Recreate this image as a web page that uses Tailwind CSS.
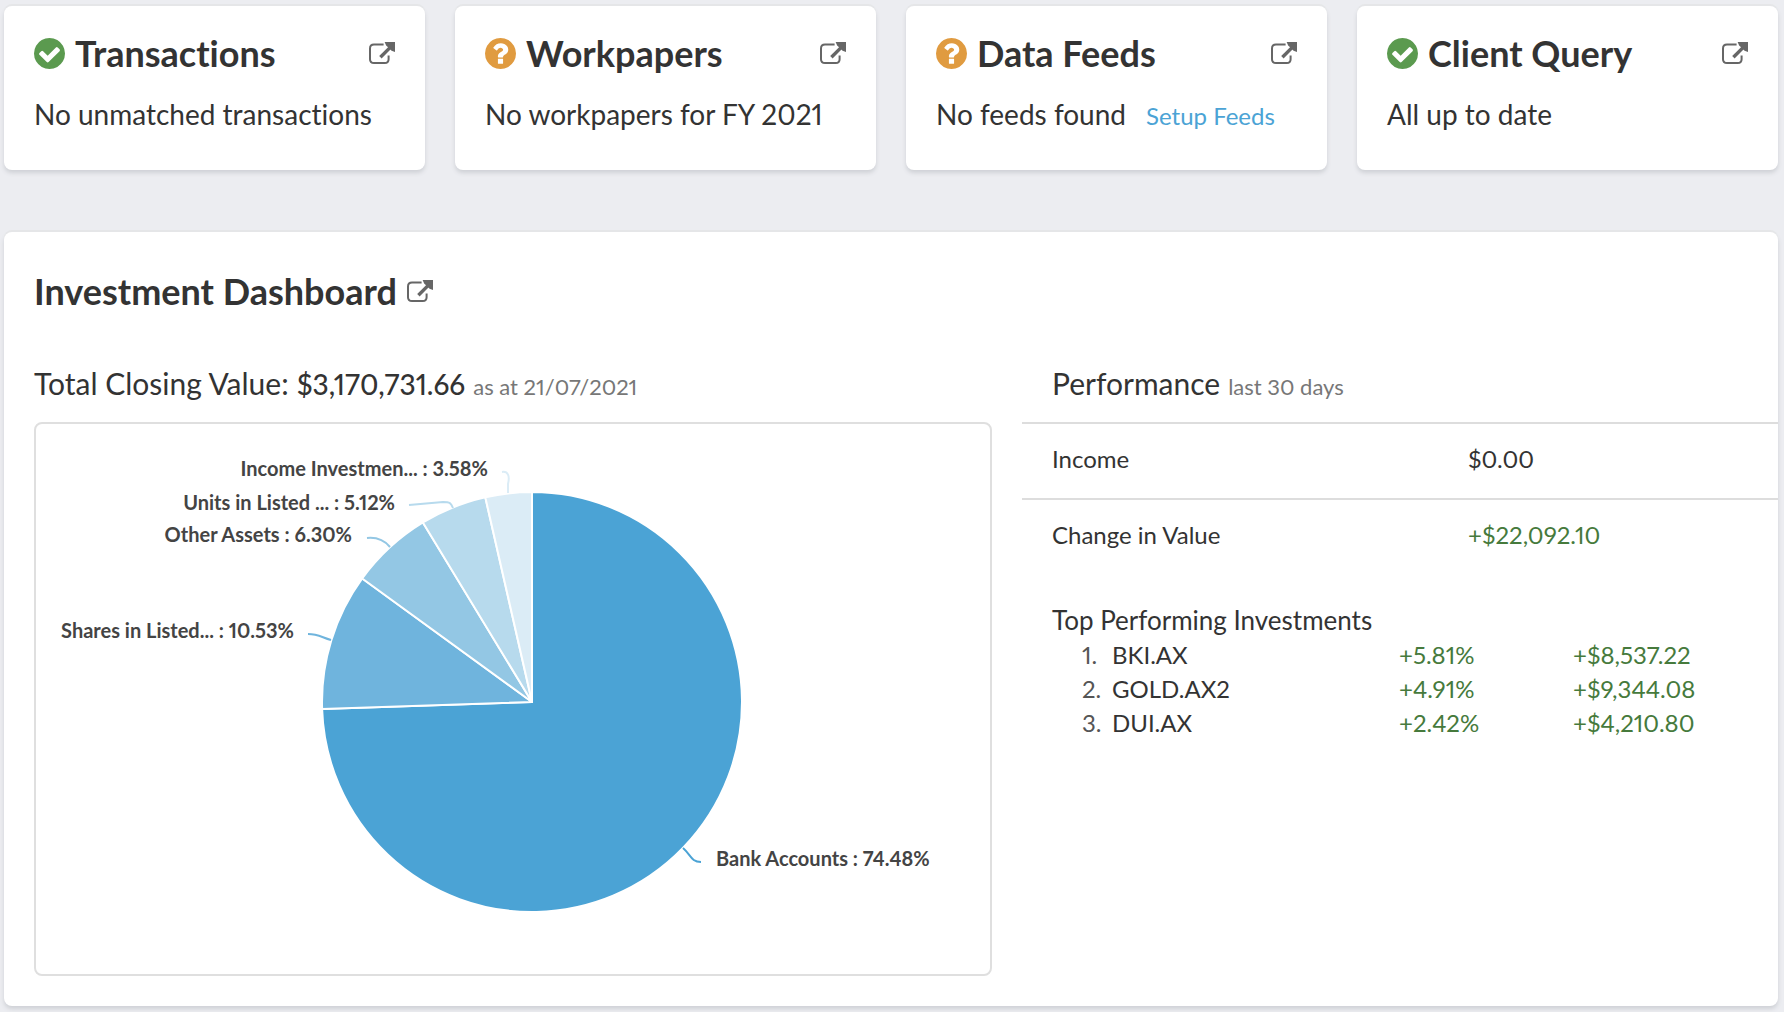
<!DOCTYPE html>
<html lang="en">
<head>
    <meta charset="UTF-8">
    <meta name="viewport" content="width=device-width, initial-scale=1">
    <script src="https://cdn.jsdelivr.net/npm/@tailwindcss/browser@4"></script>
    <title>Investment Dashboard</title>
</head>
<body class="bg-[#ecedf1] font-['Lato',sans-serif] text-[#333333] proportional-nums [font-variant-ligatures:none]">
    <!-- shared icons -->
    <svg class="hidden">
        <symbol id="check" viewBox="128 128 1536 1536">
            <path fill="currentColor" d="M1412 734q0-28-18-46l-91-90q-19-19-45-19t-45 19l-408 407-226-226q-19-19-45-19t-45 19l-91 90q-18 18-18 46 0 27 18 45l362 362q19 19 45 19 27 0 46-19l543-543q18-18 18-45zm252 162q0 209-103 385.5t-279.5 279.5-385.5 103-385.5-103-279.5-279.5-103-385.5 103-385.5 279.5-279.5 385.5-103 385.5 103 279.5 279.5 103 385.5z"/>
        </symbol>
        <symbol id="question" viewBox="128 128 1536 1536">
            <path fill="currentColor" d="M1024 1376v-192q0-14-9-23t-23-9h-192q-14 0-23 9t-9 23v192q0 14 9 23t23 9h192q14 0 23-9t9-23zm256-672q0-88-55.5-163t-138.5-116-170-41q-243 0-371 213-15 24 8 42l132 100q7 6 19 6 16 0 25-12 53-68 86-92 34-24 86-24 48 0 85.5 26t37.5 59q0 38-20 61t-68 45q-63 28-115.5 86.5t-52.5 125.5v36q0 14 9 23t23 9h192q14 0 23-9t9-23q0-19 21.5-49.5t54.5-49.5q32-18 49-28.5t46-35 44.5-48 28-60.5 12.5-81zm384 192q0 209-103 385.5t-279.5 279.5-385.5 103-385.5-103-279.5-279.5-103-385.5 103-385.5 279.5-279.5 385.5-103 385.5 103 279.5 279.5 103 385.5z"/>
        </symbol>
        <symbol id="open" viewBox="0 0 26 22">
            <path fill="none" stroke="currentColor" stroke-width="2" d="M14.6 2.6H5C2.4 2.6 1 4 1 6.4V17.2C1 19.6 2.4 21 5 21H15.8C18.4 21 19.6 19.6 19.6 17.2V13.4"/>
            <path fill="none" stroke="currentColor" stroke-width="3.4" d="M11.4 15.2L22 4.6"/>
            <path fill="currentColor" d="M15.6 0H26V10L22.6 8.8L17.2 3.4Z"/>
        </symbol>
    </svg>

    <div class="pt-[6px] pr-[6px] pb-[6px] pl-1">
        <section class="grid grid-cols-4 gap-[30px]">
            <div class="rounded-lg bg-white px-[30px] pt-[27px] pb-10 shadow-[0_-2px_0_#e5e6e8,0_3px_4px_#cfd1d6]">
                <div class="flex items-center">
                    <svg class="mr-[10px] size-[31px] text-[#5b9a4f]"><use href="#check"/></svg>
                    <h2 class="text-4xl leading-10 font-bold">Transactions</h2>
                    <a href="#" aria-label="Open Transactions" class="ml-auto text-[#666666]"><svg class="h-[22px] w-[26px]"><use href="#open"/></svg></a>
                </div>
                <p class="mt-[25px] text-[28px] leading-8">No unmatched transactions</p>
            </div>
            <div class="rounded-lg bg-white px-[30px] pt-[27px] pb-10 shadow-[0_-2px_0_#e5e6e8,0_3px_4px_#cfd1d6]">
                <div class="flex items-center">
                    <svg class="mr-[10px] size-[31px] text-[#e09b40]"><use href="#question"/></svg>
                    <h2 class="text-4xl leading-10 font-bold">Workpapers</h2>
                    <a href="#" aria-label="Open Workpapers" class="ml-auto text-[#666666]"><svg class="h-[22px] w-[26px]"><use href="#open"/></svg></a>
                </div>
                <p class="mt-[25px] text-[28px] leading-8">No workpapers for FY 2021</p>
            </div>
            <div class="rounded-lg bg-white px-[30px] pt-[27px] pb-10 shadow-[0_-2px_0_#e5e6e8,0_3px_4px_#cfd1d6]">
                <div class="flex items-center">
                    <svg class="mr-[10px] size-[31px] text-[#e09b40]"><use href="#question"/></svg>
                    <h2 class="text-4xl leading-10 font-bold">Data Feeds</h2>
                    <a href="#" aria-label="Open Data Feeds" class="ml-auto text-[#666666]"><svg class="h-[22px] w-[26px]"><use href="#open"/></svg></a>
                </div>
                <p class="mt-[25px] flex items-baseline gap-5 text-[28px] leading-8">No feeds found <a href="#" class="text-2xl leading-none text-[#4ba3d5]">Setup Feeds</a></p>
            </div>
            <div class="rounded-lg bg-white px-[30px] pt-[27px] pb-10 shadow-[0_-2px_0_#e5e6e8,0_3px_4px_#cfd1d6]">
                <div class="flex items-center">
                    <svg class="mr-[10px] size-[31px] text-[#5b9a4f]"><use href="#check"/></svg>
                    <h2 class="text-4xl leading-10 font-bold">Client Query</h2>
                    <a href="#" aria-label="Open Client Query" class="ml-auto text-[#666666]"><svg class="h-[22px] w-[26px]"><use href="#open"/></svg></a>
                </div>
                <p class="mt-[25px] text-[28px] leading-8">All up to date</p>
            </div>
        </section>

        <main class="mt-[62px] rounded-lg bg-white pt-[39px] pb-[30px] pl-[30px] shadow-[0_-2px_0_#e5e6e8,0_3px_4px_#cfd1d6]">
            <div class="flex items-center gap-[10px]">
                <h1 class="text-4xl leading-10 font-bold">Investment Dashboard</h1>
                <a href="#" aria-label="Open Investment Dashboard" class="text-[#666666]"><svg class="h-[22px] w-[26px]"><use href="#open"/></svg></a>
            </div>

            <div class="mt-[54px] grid grid-cols-[958fr_756fr] gap-[30px]">
                <section>
                    <h3 class="flex items-baseline gap-2 text-[30px] leading-9">Total Closing Value: <span class="text-[28px] leading-none font-medium">$3,170,731.66</span> <small class="text-[22px] leading-none text-[#777777]">as at 21/07/2021</small></h3>
                    <div class="mt-[21px] rounded-lg border-2 border-[#dfdfdf]">
                        <svg viewBox="0 0 954 550" class="w-full">
                            <g stroke="#ffffff" stroke-width="2" stroke-linejoin="round">
                                <path fill="#4ba3d5" d="M496 278L496 68A210 210 0 1 1 286.1 284.9Z"/>
                                <path fill="#6fb4dd" d="M496 278L286.1 284.9A210 210 0 0 1 326.2 154.5Z"/>
                                <path fill="#93c7e4" d="M496 278L326.2 154.5A210 210 0 0 1 386.9 98.5Z"/>
                                <path fill="#b7daed" d="M496 278L386.9 98.5A210 210 0 0 1 449.3 73.3Z"/>
                                <path fill="#dbecf6" d="M496 278L449.3 73.3A210 210 0 0 1 496 68Z"/>
                            </g>
                            <g fill="none" stroke-width="2">
                                <path stroke="#4ba3d5" d="M647 424C655 431 655 438 665 438"/>
                                <path stroke="#6fb4dd" d="M272 210C282 210 285 213 295 216"/>
                                <path stroke="#93c7e4" d="M331 114C341 113 349 117 354 123"/>
                                <path stroke="#b7daed" d="M373 81L407 78C414 78 415 79 417 84"/>
                                <path stroke="#dbecf6" d="M466 48C472 47 474 52 472 60V69"/>
                            </g>
                            <g fill="#444444" class="text-xl font-bold">
                                <text x="452" y="52" text-anchor="end">Income Investmen... : 3.58%</text>
                                <text x="359" y="86" text-anchor="end">Units in Listed ... : 5.12%</text>
                                <text x="316" y="118" text-anchor="end">Other Assets : 6.30%</text>
                                <text x="258" y="214" text-anchor="end">Shares in Listed... : 10.53%</text>
                                <text x="680" y="442">Bank Accounts : 74.48%</text>
                            </g>
                        </svg>
                    </div>
                </section>

                <section>
                    <h3 class="flex items-baseline gap-2 pl-[30px] text-[30px] leading-9">Performance <small class="text-[22px] leading-none text-[#777777]">last 30 days</small></h3>
                    <table class="mt-[21px] w-full table-fixed text-left text-2xl leading-[30px]">
                        <tr class="border-t-2 border-[#dddddd]">
                            <th class="w-[59%] pt-5 pb-6 pl-[30px] font-normal">Income</th>
                            <td class="pt-5 pb-6">$0.00</td>
                        </tr>
                        <tr class="border-t-2 border-[#dddddd]">
                            <th class="pt-5 pb-6 pl-[30px] font-normal">Change in Value</th>
                            <td class="pt-5 pb-6 text-[#467a3c]">+$22,092.10</td>
                        </tr>
                    </table>
                    <h4 class="mt-7 pl-[30px] text-[26px] leading-9">Top Performing Investments</h4>
                    <ol class="pl-[60px] text-2xl leading-[34px]">
                        <li class="grid grid-cols-[30px_287fr_174fr_205fr]">
                            <span class="text-[#555555]">1.</span>
                            <span>BKI.AX</span>
                            <span class="text-[#467a3c]">+5.81%</span>
                            <span class="text-[#467a3c]">+$8,537.22</span>
                        </li>
                        <li class="grid grid-cols-[30px_287fr_174fr_205fr]">
                            <span class="text-[#555555]">2.</span>
                            <span>GOLD.AX2</span>
                            <span class="text-[#467a3c]">+4.91%</span>
                            <span class="text-[#467a3c]">+$9,344.08</span>
                        </li>
                        <li class="grid grid-cols-[30px_287fr_174fr_205fr]">
                            <span class="text-[#555555]">3.</span>
                            <span>DUI.AX</span>
                            <span class="text-[#467a3c]">+2.42%</span>
                            <span class="text-[#467a3c]">+$4,210.80</span>
                        </li>
                    </ol>
                </section>
            </div>
        </main>
    </div>
</body>
</html>
